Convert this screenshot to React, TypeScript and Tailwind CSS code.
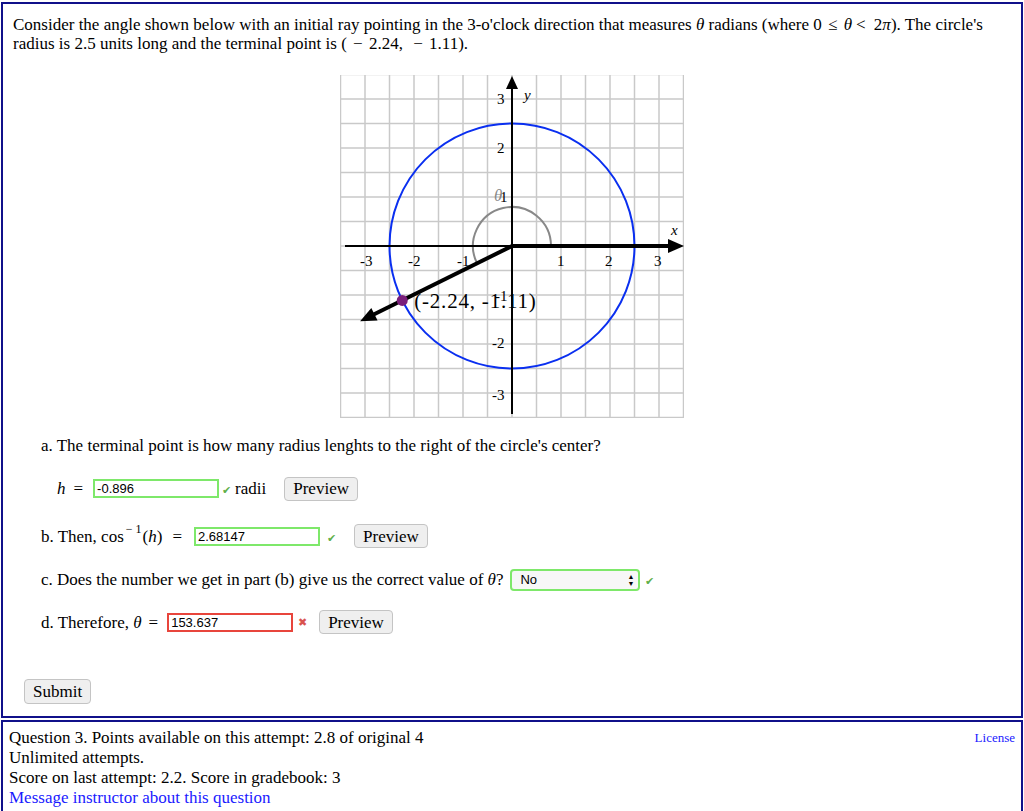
import React from "react";

const serif = { fontFamily: '"Liberation Serif", "Times New Roman", serif' };

function Graph() {
  const cx = 172;
  const cy = 171;
  const u = 49;
  const lines = [];
  for (let k = -7; k <= 7; k++) {
    lines.push(
      <line key={"v" + k} x1={cx + k * 24.5} y1={0} x2={cx + k * 24.5} y2={343} stroke="#c9c9c9" strokeWidth={1.5} />
    );
    lines.push(
      <line key={"h" + k} x1={0} y1={cy + k * 24.5} x2={344} y2={cy + k * 24.5} stroke="#c9c9c9" strokeWidth={1.5} />
    );
  }
  const px = cx - 2.24 * u;
  const py = cy + 1.11 * u;
  const ex = cx - 3.1 * u;
  const ey = cy + 3.1 * 0.4955 * u;
  // arc from 0 to 206.4deg, radius 39
  const ar = 39;
  const ang = (206.4 * Math.PI) / 180;
  const arcEndX = cx + ar * Math.cos(ang);
  const arcEndY = cy - ar * Math.sin(ang);
  const dx = ex - cx;
  const dy = ey - cy;
  const len = Math.hypot(dx, dy);
  const ux = dx / len;
  const uy = dy / len;
  const base = { x: ex - ux * 16, y: ey - uy * 16 };
  const arrow2 = `${ex},${ey} ${base.x - uy * 7},${base.y + ux * 7} ${base.x + uy * 7},${base.y - ux * 7}`;
  return (
    <svg width={344} height={343} viewBox="0 0 344 343" style={serif}>
      {lines}
      <circle cx={cx} cy={cy} r={2.5 * u} fill="none" stroke="#0a2ff0" strokeWidth={2} />
      <path
        d={`M ${cx + ar} ${cy} A ${ar} ${ar} 0 1 0 ${arcEndX} ${arcEndY}`}
        fill="none"
        stroke="#888"
        strokeWidth={2}
      />
      {/* axes */}
      <line x1={5} y1={cy} x2={cx} y2={cy} stroke="#000" strokeWidth={2} />
      <line x1={cx} y1={cy} x2={332} y2={cy} stroke="#000" strokeWidth={4} />
      <polygon points={`344,${cy} 328,${cy - 7} 328,${cy + 7}`} fill="#000" />
      <line x1={cx} y1={339} x2={cx} y2={12} stroke="#000" strokeWidth={2} />
      <polygon points={`${cx},1 ${cx - 6},14 ${cx + 6},14`} fill="#000" />
      {/* terminal ray */}
      <line x1={cx} y1={cy} x2={base.x + ux * 2} y2={base.y + uy * 2} stroke="#000" strokeWidth={4} />
      <polygon points={arrow2} fill="#000" />
      {/* labels */}
      <g fontSize={15} fill="#000">
        <text x={20} y={191}>-3</text>
        <text x={68} y={191}>-2</text>
        <text x={117} y={191}>-1</text>
        <text x={217} y={191}>1</text>
        <text x={265} y={191}>2</text>
        <text x={314} y={191}>3</text>
        <text x={157} y={29}>3</text>
        <text x={157} y={78}>2</text>
        <text x={160} y={127}>1</text>
        <text x={155} y={226}>-1</text>
        <text x={152} y={273}>-2</text>
        <text x={152} y={325}>-3</text>
        <text x={184} y={25} fontStyle="italic">y</text>
        <text x={331} y={160} fontStyle="italic">x</text>
      </g>
      <text x={154} y={126} fontSize={17} fill="#888" fontStyle="italic">θ</text>
      <circle cx={px} cy={py} r={5.5} fill="#7a1f7a" />
      <text x={px + 12} y={py + 8} fontSize={21} letterSpacing={0.8} fill="#000">(-2.24, -1.11)</text>
    </svg>
  );
}

function Check() {
  return <span className="text-[11px] leading-none text-[#5fb04a]">✔</span>;
}

function PreviewBtn() {
  return (
    <button
      className="h-[24px] rounded-[4px] border border-[#c4c4c4] bg-[#efefef] px-[8px] text-[17px] leading-none text-black"
      style={serif}
    >
      Preview
    </button>
  );
}

function Field({ value, bad }: { value: string; bad?: boolean }) {
  return (
    <div
      className={`flex h-[19px] w-[126px] items-center border-2 px-[2px] text-[13px] text-black ${
        bad ? "border-[#e8453c]" : "border-[#7ee86a]"
      }`}
      style={{ fontFamily: '"Liberation Sans", Arial, sans-serif' }}
    >
      {value}
    </div>
  );
}

export default function App() {
  return (
    <div className="min-h-[811px] bg-white px-[1px] pt-[2px] text-[17px] text-black" style={serif}>
      <div className="flex h-[716px] flex-col border-2 border-[#10108a] pl-[10px] pr-[10px] pt-[11px]">
        <p className="leading-[19px]">
          Consider the angle shown below with an initial ray pointing in the 3-o'clock direction that measures{" "}
          <i>θ</i> radians (where 0 <span className="mx-[2px]">≤</span> <i>θ</i>
          <span className="mx-[4px]">&lt;</span> 2<i>π</i>). The circle's radius is 2.5 units long and the
          terminal point is ( <span className="mx-[2px]">−</span> 2.24, <span className="ml-[6px] mr-[2px]">−</span>{" "}
          1.11).
        </p>
        <div className="mt-[22px] flex justify-center">
          <Graph />
        </div>
        <div className="pl-[28px]">
          <p className="mt-[18px] leading-[19px]">
            a. The terminal point is how many radius lenghts to the right of the circle's center?
          </p>
          <div className="mt-[21px] flex items-center pl-[16px]">
            <i>h</i>
            <span className="ml-[8px] mr-[10px]">=</span>
            <Field value="-0.896" />
            <span className="ml-[3px]"><Check /></span>
            <span className="ml-[4px]">radii</span>
            <span className="ml-[18px]"><PreviewBtn /></span>
          </div>
          <div className="mt-[22px] flex items-center">
            <span>b. Then, cos</span>
            <span className="relative -top-[7px] ml-[2px] text-[12px]">− 1</span>
            <span className="ml-[1px]">(<i>h</i>)</span>
            <span className="ml-[10px] mr-[12px]">=</span>
            <Field value="2.68147" />
            <span className="ml-[7px]"><Check /></span>
            <span className="ml-[18px]"><PreviewBtn /></span>
          </div>
          <div className="mt-[18px] flex items-center">
            <span>
              c. Does the number we get in part (b) give us the correct value of <i>θ</i>?
            </span>
            <div
              className="ml-[7px] flex h-[22px] w-[130px] items-center justify-between rounded-[4px] border-2 border-[#7ee86a] bg-[#f7f7f7] pl-[8px] pr-[4px] text-[13px]"
              style={{ fontFamily: '"Liberation Sans", Arial, sans-serif' }}
            >
              <span>No</span>
              <span className="flex flex-col text-[7px] leading-[7px]">
                <span>▲</span>
                <span>▼</span>
              </span>
            </div>
            <span className="ml-[5px]"><Check /></span>
          </div>
          <div className="mt-[17px] flex items-center">
            <span>d. Therefore, <i>θ</i></span>
            <span className="ml-[7px] mr-[9px]">=</span>
            <Field value="153.637" bad />
            <span className="ml-[5px] text-[11px] leading-none text-[#d9534f]">✖</span>
            <span className="ml-[12px]"><PreviewBtn /></span>
          </div>
        </div>
        <div className="mt-[44px] pl-[11px]">
          <button
            className="h-[25px] rounded-[4px] border border-[#c4c4c4] bg-[#efefef] px-[8px] text-[17px] leading-none text-black"
            style={serif}
          >
            Submit
          </button>
        </div>
      </div>
      <div className="mt-[2px] flex min-h-[92px] justify-between border-2 border-b-0 border-[#10108a] pl-[6px] pr-[6px] pt-[6px]">
        <div className="leading-[20px]">
          <div>Question 3. Points available on this attempt: 2.8 of original 4</div>
          <div>Unlimited attempts.</div>
          <div>Score on last attempt: 2.2. Score in gradebook: 3</div>
          <div className="text-[#1a1aff]">Message instructor about this question</div>
        </div>
        <div className="text-[13px] text-[#1a1aff]">License</div>
      </div>
    </div>
  );
}
